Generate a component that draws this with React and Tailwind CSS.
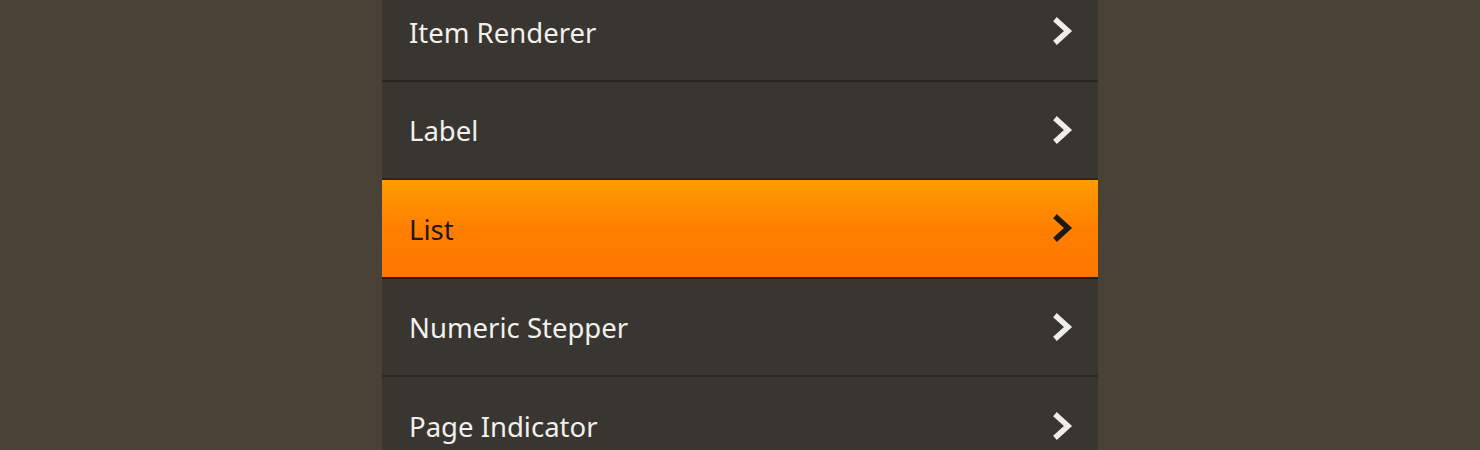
import React from 'react';

const ITEMS = [
  { label: 'Item Renderer' },
  { label: 'Label' },
  { label: 'List', selected: true },
  { label: 'Numeric Stepper' },
  { label: 'Page Indicator' },
];

const Chevron = ({ dark }) => (
  <svg width="24" height="28" viewBox="0 0 24 28" className="shrink-0">
    <polyline
      points="6,4 17,14 6,24"
      fill="none"
      stroke={dark ? '#1c1a17' : '#f0eeea'}
      strokeWidth="5.5"
      strokeLinejoin="miter"
      strokeLinecap="square"
    />
  </svg>
);

export default function App() {
  return (
    <div className="w-[1480px] h-[450px] overflow-hidden bg-[#4a4137] flex justify-center font-['Noto_Sans',sans-serif]">
      <div className="w-[716px] h-full bg-[#393531] overflow-hidden">
        <ul className="-mt-[17px]">
          {ITEMS.map((item) => (
            <li
              key={item.label}
              className={
                item.selected
                  ? 'h-[98.6px] flex items-center justify-between pl-[27px] pr-[23px] border-b-2 border-[#221f1c] bg-gradient-to-b from-[#ff9c00] via-[#ff7f00] via-50% to-[#ff7700] text-[#1c1a17]'
                  : 'h-[98.6px] flex items-center justify-between pl-[27px] pr-[23px] border-b-2 border-[#2a2622] text-[#f2f0ec]'
              }
            >
              <span className="text-[27.5px] leading-none pt-[2px]">{item.label}</span>
              <Chevron dark={item.selected} />
            </li>
          ))}
        </ul>
      </div>
    </div>
  );
}
